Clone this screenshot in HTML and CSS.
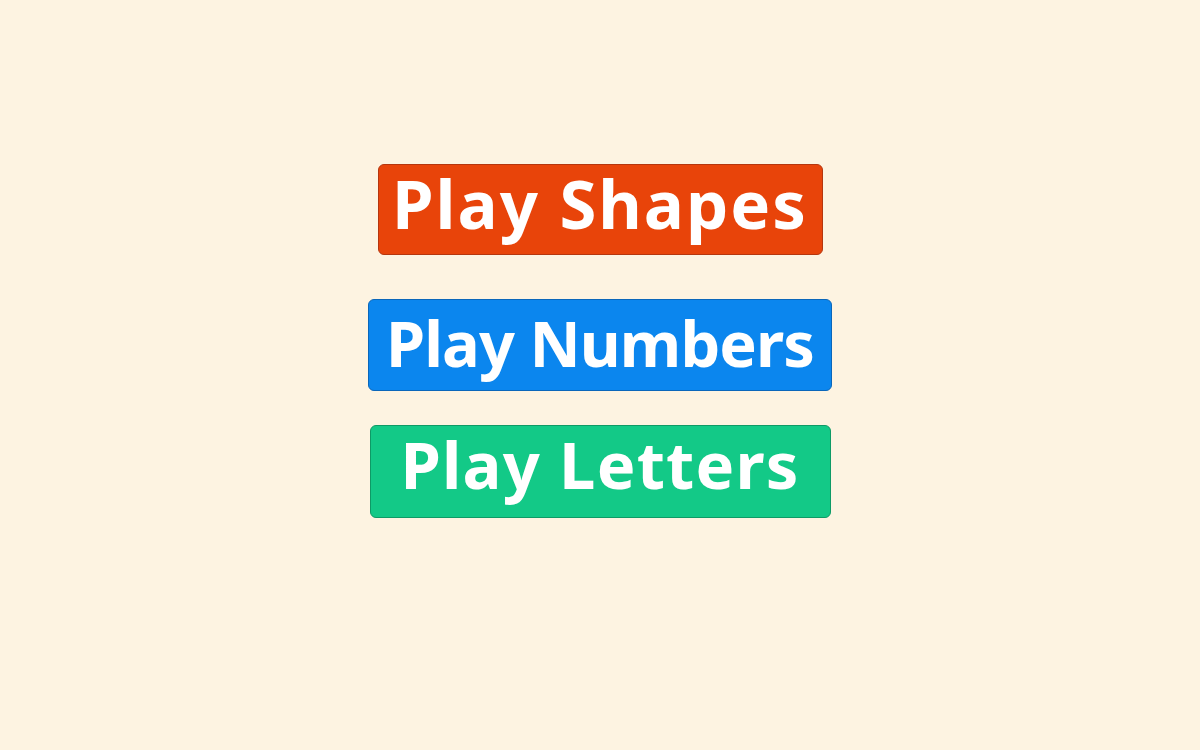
FILE: index.html
```html
<!DOCTYPE html>
<html lang="en">
<head>
    <meta charset="UTF-8">
    <meta name="viewport" content="width=device-width, initial-scale=1.0">
    <title>Play</title>
    <link rel="stylesheet" href="styles.css">
</head>

<body>
    <div class="menu">
        <button class="play-btn shapes">Play Shapes</button>
        <button class="play-btn numbers">Play Numbers</button>
        <button class="play-btn letters">Play Letters</button>
    </div>
</body>
</html>
```

FILE: styles.css
```css
/* General Styles */
body {
    font-family: "Noto Sans", "Open Sans", sans-serif;
    background-color: #FDF3E1;  /* Cream */
    margin: 0;
    padding: 0;
    height: 750px;
}

.menu {
    display: flex;
    flex-direction: column;
    align-items: center;
    padding-top: 164px;
}

/* Game Buttons */
.play-btn {
    box-sizing: border-box;
    font-family: inherit;
    font-weight: 700;
    line-height: 1;
    color: #fff;
    padding: 0;
    text-align: center;
    white-space: nowrap;
    border-radius: 6px;
    border: 1px solid;
    cursor: pointer;
}

.shapes {
    width: 445px;
    font-size: 67px;
    letter-spacing: 2px;
    padding: 5px 0 17px;
    background-color: #E8440A;  /* Orange */
    border-color: #B5360E;
    margin-bottom: 44px;
}

.numbers {
    width: 464px;
    font-size: 63px;
    letter-spacing: -0.9px;
    padding: 11px 0 16px;
    background-color: #0B86EE;  /* Blue */
    border-color: #0A66BA;
    margin-bottom: 34px;
}

.letters {
    width: 461px;
    font-size: 65px;
    letter-spacing: 1.2px;
    padding: 6px 0 20px;
    background-color: #13C987;  /* Green */
    border-color: #0E9A66;
}
```
